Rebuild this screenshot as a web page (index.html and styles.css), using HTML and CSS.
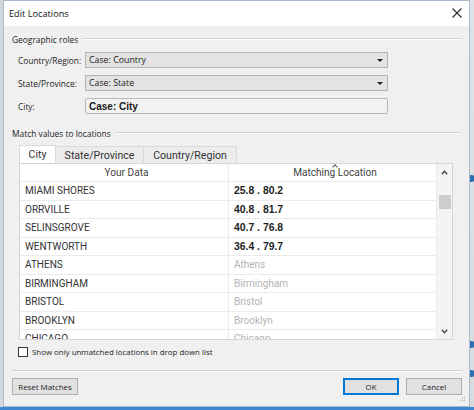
FILE: index.html
```html
<!DOCTYPE html>
<html>
<head>
    <title>Edit Locations</title>
    <link rel="stylesheet" href="styles.css">
</head>
<body>

<div class="screen">
    <div class="dialog">
        <div class="titlebar">
            <span class="title">Edit Locations</span>
            <svg class="close" width="10" height="10" viewBox="0 0 10 10">
                <path d="M0.5 0.5 L9.5 9.5 M9.5 0.5 L0.5 9.5" stroke="#2b2b2b" stroke-width="1.1" fill="none"/>
            </svg>
        </div>

        <div class="content">
            <div class="group-title">Geographic roles</div>

            <div class="roles">
                <div class="role-label">Country/Region:</div>
                <div class="combo">Case: Country<span class="arrow"></span></div>

                <div class="role-label">State/Province:</div>
                <div class="combo">Case: State<span class="arrow"></span></div>

                <div class="role-label">City:</div>
                <div class="textbox">Case: City</div>
            </div>

            <div class="group-title match-title">Match values to locations</div>

            <div class="tabs-area">
                <div class="tabs">
                    <div class="tab active">City</div>
                    <div class="tab">State/Province</div>
                    <div class="tab">Country/Region</div>
                </div>

                <div class="grid">
                    <div class="grid-main">
                        <div class="grid-head">
                            <div class="cell">Your Data</div>
                            <div class="cell sorted">Matching Location</div>
                        </div>
                        <div class="grid-row">
                            <div class="cell">MIAMI SHORES</div>
                            <div class="cell value">25.8 . 80.2</div>
                        </div>
                        <div class="grid-row">
                            <div class="cell">ORRVILLE</div>
                            <div class="cell value">40.8 . 81.7</div>
                        </div>
                        <div class="grid-row">
                            <div class="cell">SELINSGROVE</div>
                            <div class="cell value">40.7 . 76.8</div>
                        </div>
                        <div class="grid-row">
                            <div class="cell">WENTWORTH</div>
                            <div class="cell value">36.4 . 79.7</div>
                        </div>
                        <div class="grid-row">
                            <div class="cell">ATHENS</div>
                            <div class="cell hint">Athens</div>
                        </div>
                        <div class="grid-row">
                            <div class="cell">BIRMINGHAM</div>
                            <div class="cell hint">Birmingham</div>
                        </div>
                        <div class="grid-row">
                            <div class="cell">BRISTOL</div>
                            <div class="cell hint">Bristol</div>
                        </div>
                        <div class="grid-row">
                            <div class="cell">BROOKLYN</div>
                            <div class="cell hint">Brooklyn</div>
                        </div>
                        <div class="grid-row">
                            <div class="cell">CHICAGO</div>
                            <div class="cell hint">Chicago</div>
                        </div>
                    </div>

                    <div class="vscroll">
                        <svg class="scroll-btn" width="7" height="5" viewBox="0 0 7 5">
                            <path d="M0.8 4.2 L3.5 1.2 L6.2 4.2" stroke="#444" stroke-width="1.3" fill="none"/>
                        </svg>
                        <div class="thumb"></div>
                        <div class="track"></div>
                        <svg class="scroll-btn" width="7" height="5" viewBox="0 0 7 5">
                            <path d="M0.8 0.8 L3.5 3.8 L6.2 0.8" stroke="#444" stroke-width="1.3" fill="none"/>
                        </svg>
                    </div>
                </div>
            </div>

            <div class="check">
                <span class="box"></span>
                <span>Show only unmatched locations in drop down list</span>
            </div>

            <div class="separator"></div>

            <div class="buttons">
                <div class="btn">Reset Matches</div>
                <div class="spacer"></div>
                <div class="btn default">OK</div>
                <div class="btn">Cancel</div>
            </div>
        </div>

        <svg class="grip" width="8" height="8" viewBox="0 0 8 8">
            <rect x="6" y="0" width="1" height="1" fill="#b5b5b5"/>
            <rect x="4" y="2" width="1" height="1" fill="#b5b5b5"/>
            <rect x="6" y="2" width="1" height="1" fill="#b5b5b5"/>
            <rect x="2" y="4" width="1" height="1" fill="#b5b5b5"/>
            <rect x="4" y="4" width="1" height="1" fill="#b5b5b5"/>
            <rect x="6" y="4" width="1" height="1" fill="#b5b5b5"/>
        </svg>
    </div>

    <div class="desk-strip">
        <span class="dot d1"></span>
        <span class="dot d2"></span>
        <span class="dot d3"></span>
    </div>
</div>
<div class="taskbar"></div>

</body>
</html>
```

FILE: styles.css
```css
html, body { margin: 0; padding: 0; }
body { width: 474px; height: 410px; overflow: hidden; background: #d3d8de; font-family: "Open Sans", "Noto Sans", sans-serif; font-size: 8.4px; color: #1c1c1c; }

.screen { display: flex; height: 407px; }
.desk-strip { position: relative; flex: 1; background: linear-gradient(#dfe3e7, #d7dce1); }
.desk-strip .dot { position: absolute; left: 0; width: 5px; height: 7px; border-radius: 0 4px 4px 0; background: #2f6fb3; }
.desk-strip .d1 { top: 175px; }
.desk-strip .d2 { top: 341px; }
.desk-strip .d3 { top: 370px; }
.taskbar { height: 3px; background: #3b86cf; }

.dialog { position: relative; box-sizing: border-box; width: 467px; height: 407px; margin-left: 3px; border: 1px solid #a9bacd; background: #f0f0f0; }

.titlebar { display: flex; align-items: center; justify-content: space-between; height: 25px; padding: 0 7px 0 5px; background: #fff; }
.titlebar .title { font-size: 9.2px; color: #111; }
.titlebar .close { margin-top: -1px; }

.content { padding: 7px 7px 0 8px; }

.group-title { display: flex; align-items: center; height: 12px; gap: 4px; color: #1c1c1c; }
.group-title::after { content: ""; flex: 1; border-top: 1px solid #d3d3d3; border-bottom: 1px solid #fff; }
.match-title { margin-top: 13px; }

.roles { display: grid; grid-template-columns: 67px 303px; grid-auto-rows: 16px; row-gap: 7px; margin-top: 7px; padding-left: 6px; }
.role-label { display: flex; align-items: center; }
.combo { position: relative; display: flex; align-items: center; box-sizing: border-box; padding-left: 3px; border: 1px solid #b3b3b3; background: #e3e3e3; font-size: 8.8px; }
.combo .arrow { position: absolute; right: 4px; top: 6px; border-left: 3px solid transparent; border-right: 3px solid transparent; border-top: 3px solid #1e1e1e; }
.textbox { display: flex; align-items: center; box-sizing: border-box; padding-left: 3px; border: 1px solid #b8b8b8; border-radius: 2px; background: #f2f2f2; font-family: "Liberation Sans", Arial, sans-serif; font-weight: bold; font-size: 10px; color: #1a1a1a; }

.tabs-area { width: 434px; margin-top: 6px; margin-left: 7px; }
.tabs { display: flex; height: 18px; font-family: Roboto, sans-serif; font-size: 10.6px; color: #333; }
.tab { display: flex; align-items: center; justify-content: center; box-sizing: border-box; margin-top: 1px; padding: 0 9px; border: 1px solid #dadada; border-bottom: none; border-left: none; background: #ececec; }
.tab:first-child { border-left: 1px solid #dadada; }
.tab.active { width: 37px; margin-top: 0; padding: 0; background: #fff; }
.tabs .tab:nth-child(2) { width: 88px; }
.tabs .tab:nth-child(3) { width: 93px; }

.grid { display: flex; box-sizing: border-box; height: 177px; border: 1px solid #d6d6d6; background: #fff; font-family: Roboto, sans-serif; font-size: 10px; color: #333; }
.grid-main { flex: 1; overflow: hidden; }
.grid-head, .grid-row { display: grid; grid-template-columns: 208px 1fr; }
.grid-head { height: 17px; }
.grid-head .cell { justify-content: center; color: #444; font-size: 10.1px; }
.grid-head .cell.sorted { position: relative; }
.grid-head .cell.sorted::before { content: ""; position: absolute; left: 104px; top: 1px; width: 3px; height: 3px; border-left: 1px solid #555; border-top: 1px solid #555; transform: rotate(45deg); }
.grid-row { height: 18.5px; box-sizing: border-box; border-top: 1px solid #ebebeb; }
.grid-row:first-of-type { border-top: none; }
.cell { display: flex; align-items: center; padding-left: 5px; overflow: hidden; white-space: nowrap; }
.cell + .cell { border-left: 1px solid #ececec; }
.cell.value { padding-left: 5px; font-family: "Liberation Sans", Arial, sans-serif; font-weight: bold; font-size: 10.4px; color: #1e1e1e; }
.cell.hint { color: #b3b3b3; }

.vscroll { display: flex; flex-direction: column; align-items: center; width: 15px; border-left: 1px solid #e8e8e8; background: #f4f4f4; }
.scroll-btn { margin: 6px 0 5px; }
.thumb { width: 12px; height: 14px; margin-top: 15px; background: #cdcdcd; }
.track { flex: 1; }

.check { display: flex; align-items: center; gap: 4px; height: 10px; margin-top: 7px; padding-left: 6px; font-size: 7.9px; }
.check .box { box-sizing: border-box; width: 10px; height: 10px; border: 1px solid #333; background: #fff; }

.separator { margin-top: 13px; border-top: 1px solid #d0d0d0; border-bottom: 1px solid #fff; }

.buttons { display: flex; gap: 7px; margin-top: 6px; font-size: 7.9px; }
.buttons .spacer { flex: 1; }
.btn { display: flex; align-items: center; justify-content: center; box-sizing: border-box; width: 56px; height: 17px; border: 1px solid #adadad; background: #e1e1e1; color: #1c1c1c; }
.btn:first-child { width: 66px; }
.btn.default { border: 1px solid #0078d7; box-shadow: inset 0 0 0 1px #0078d7; }

.grip { position: absolute; right: 3px; bottom: 2px; }
```
